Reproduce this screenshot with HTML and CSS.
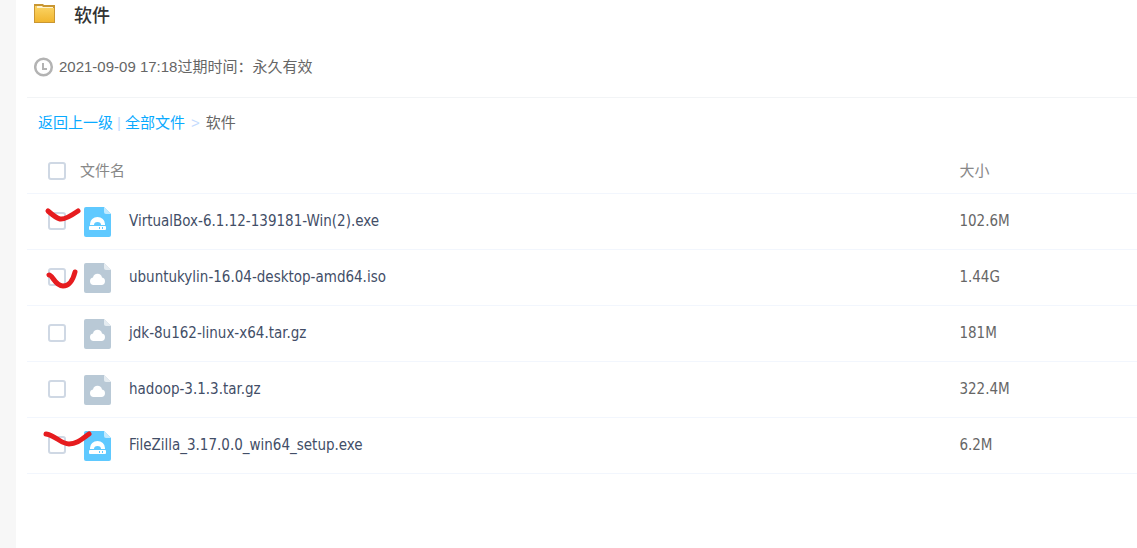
FILE: index.html
```html
<!DOCTYPE html>
<html lang="zh-CN">
  <head>
    <meta charset="UTF-8">
    <title>软件</title>
    <link rel="stylesheet" href="styles.css">
  </head>
  <body>
    <!-- shared icons -->
    <svg class="icon-defs" width="0" height="0">
      <symbol id="icon-exe" viewBox="0 0 27 30">
        <path fill="#5fc9ff" d="M2 0h18l7 7v21a2 2 0 0 1-2 2H2a2 2 0 0 1-2-2V2a2 2 0 0 1 2-2z"/>
        <path fill="#c2eaff" d="M20 0l7 7h-5a2 2 0 0 1-2-2z"/>
        <path fill="#fff" d="M6 17a7.500 7 0 0 1 15 0v1h-4a3.500 3 0 0 0-7 0H6z"/>
        <rect x="5" y="19" width="17" height="4" rx="1" fill="#fff"/>
        <path fill="#5fc9ff" d="M15 20h1v2h-1zM18 20h1v2h-1z"/>
      </symbol>
      <symbol id="icon-file" viewBox="0 0 27 30">
        <path fill="#b9c9d6" d="M2 0h18l7 7v21a2 2 0 0 1-2 2H2a2 2 0 0 1-2-2V2a2 2 0 0 1 2-2z"/>
        <path fill="#e5ecf1" d="M20 0l7 7h-5a2 2 0 0 1-2-2z"/>
        <path fill="#fff" d="M9.500 22a3.800 3.800 0 0 1-.5-7.500 4.600 4.600 0 0 1 9 0 3.800 3.800 0 0 1-.5 7.500z"/>
      </symbol>
    </svg>

    <main class="share">
      <header class="share-head">
        <h1 class="share-title">
          <svg class="folder" viewBox="0 0 22 20" width="22" height="20">
            <defs>
              <linearGradient id="folder-fill" x1="0" y1="0" x2="0" y2="1">
                <stop offset="0" stop-color="#fbd465"/>
                <stop offset="1" stop-color="#f1b62f"/>
              </linearGradient>
            </defs>
            <path fill="#c99632" d="M0 0h9l1 1h11v18H0z"/>
            <path fill="#fff3cf" d="M3 2h5l1 1h10v2H3z"/>
            <path fill="url(#folder-fill)" d="M1 2h2v2h17v14H1z"/>
          </svg>
          <span>软件</span>
        </h1>
        <p class="share-time">
          <svg class="clock" viewBox="0 0 20 20" width="20" height="20" fill="none" stroke="#b3b3b3">
            <circle cx="9.500" cy="10" r="8.300" stroke-width="2.500"/>
            <path d="M9 6v6h4" stroke-width="2"/>
          </svg>
          <span>2021-09-09 17:18过期时间：永久有效</span>
        </p>
      </header>

      <nav class="crumbs">
        <a href="#">返回上一级</a>
        <span class="sep">|</span>
        <a href="#">全部文件</a>
        <span class="arrow">&gt;</span>
        <span>软件</span>
      </nav>

      <table class="files">
        <thead>
          <tr>
            <th class="col-name">
              <div class="cell">
                <input type="checkbox" class="check" id="check-all">
                <label for="check-all">文件名</label>
              </div>
            </th>
            <th class="col-size">大小</th>
          </tr>
        </thead>
        <tbody>
          <tr>
            <td>
              <div class="cell">
                <input type="checkbox" class="check" id="file-1">
                <svg class="file-icon"><use href="#icon-exe"/></svg>
                <label for="file-1">VirtualBox-6.1.12-139181-Win(2).exe</label>
                <svg class="mark" viewBox="0 0 60 56"><path d="M21 17Q29 24 33 25Q38 26 51 17"/></svg>
              </div>
            </td>
            <td>102.6M</td>
          </tr>
          <tr>
            <td>
              <div class="cell">
                <input type="checkbox" class="check" id="file-2">
                <svg class="file-icon"><use href="#icon-file"/></svg>
                <label for="file-2">ubuntukylin-16.04-desktop-amd64.iso</label>
                <svg class="mark" viewBox="0 0 60 56"><path d="M22 25C25 24 28 36 36 36C43 36 46 30 48 22"/></svg>
              </div>
            </td>
            <td>1.44G</td>
          </tr>
          <tr>
            <td>
              <div class="cell">
                <input type="checkbox" class="check" id="file-3">
                <svg class="file-icon"><use href="#icon-file"/></svg>
                <label for="file-3">jdk-8u162-linux-x64.tar.gz</label>
              </div>
            </td>
            <td>181M</td>
          </tr>
          <tr>
            <td>
              <div class="cell">
                <input type="checkbox" class="check" id="file-4">
                <svg class="file-icon"><use href="#icon-file"/></svg>
                <label for="file-4">hadoop-3.1.3.tar.gz</label>
              </div>
            </td>
            <td>322.4M</td>
          </tr>
          <tr>
            <td>
              <div class="cell">
                <input type="checkbox" class="check" id="file-5">
                <svg class="file-icon"><use href="#icon-exe"/></svg>
                <label for="file-5">FileZilla_3.17.0.0_win64_setup.exe</label>
                <svg class="mark" viewBox="0 0 72 56"><path d="M19 16C28 17 34 26 42 26C50 26 55 21 62 16"/></svg>
              </div>
            </td>
            <td>6.2M</td>
          </tr>
        </tbody>
      </table>
    </main>
  </body>
</html>
```
FILE: styles.css
```css
* {
  box-sizing: border-box;
}
body {
  margin: 0;
  background: #f7f7f7;
  color: #666;
  font-family: "Liberation Sans", "Noto Sans CJK SC", sans-serif;
  font-size: 15px;
  line-height: 24px;
}
a {
  color: #09aaff;
  text-decoration: none;
}
.icon-defs {
  position: absolute;
}
.share {
  min-height: 100vh;
  margin-left: 16px;
  padding-left: 11px;
  background: #fff;
}

/* title and date */
.share-head {
  padding: 4px 0 18px 7px;
  border-bottom: 1px solid #f2f4f6;
}
.share-title {
  display: flex;
  gap: 18px;
  margin: 0;
  color: #333;
  font-size: 18px;
  font-weight: 500;
}
.share-time {
  display: flex;
  align-items: center;
  gap: 5px;
  margin: 27px 0 0;
}

/* breadcrumb */
.crumbs {
  display: flex;
  gap: 4px;
  padding: 13px 0 14px 11px;
}
.crumbs .sep,
.crumbs .arrow {
  color: #c4dbfe;
}
.crumbs .arrow {
  padding: 0 2px;
}

/* file list */
.files {
  width: 100%;
  border-collapse: collapse;
  table-layout: fixed;
}
.files th,
.files td {
  height: 56px;
  padding: 0;
  border-bottom: 1px solid #f2f6fd;
  font-weight: normal;
  text-align: left;
}
.files th {
  height: 44px;
  color: #888;
}
.files td {
  font-family: "DejaVu Sans Condensed", "Noto Sans", "Noto Sans CJK SC", sans-serif;
}
.files td label {
  color: #424e67;
}
.col-size {
  width: 16%;
}
.cell {
  position: relative;
  display: flex;
  align-items: center;
  padding-left: 21px;
}
.check {
  appearance: none;
  width: 18px;
  height: 18px;
  margin: 0 14px 0 0;
  border: 2px solid #cfd8e4;
  border-radius: 3px;
  background: #fff;
}
.check:checked {
  background: #09aaff;
}
.file-icon {
  width: 27px;
  height: 30px;
  margin: 2px 18px 0 4px;
}

/* red pen strokes over the row */
.mark {
  position: absolute;
  top: -11px;
  left: 0;
  height: 56px;
  fill: none;
  stroke: #e61c1f;
  stroke-width: 5;
  stroke-linecap: round;
  stroke-linejoin: round;
  pointer-events: none;
}
```
